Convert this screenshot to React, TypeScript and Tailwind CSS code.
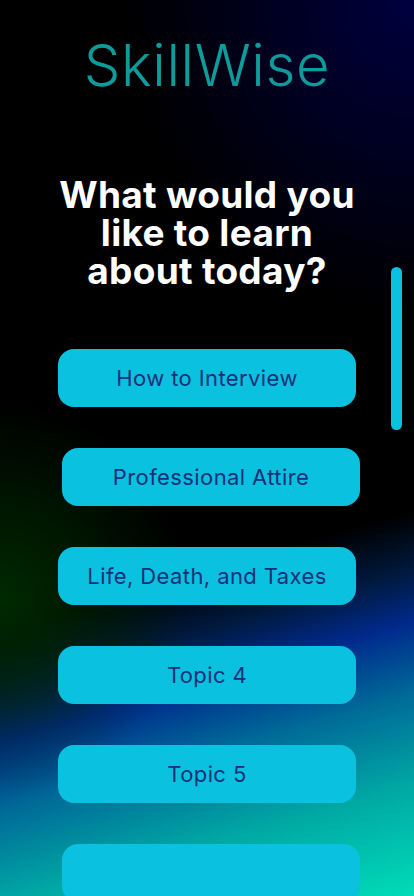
import React from "react";

const topics = [
  { label: "How to Interview", shift: false },
  { label: "Professional Attire", shift: true },
  { label: "Life, Death, and Taxes", shift: false },
  { label: "Topic 4", shift: false },
  { label: "Topic 5", shift: false },
  { label: "", shift: true },
];

export default function App() {
  return (
    <div className="relative h-screen w-full overflow-hidden bg-black bg-[radial-gradient(ellipse_70%_35%_at_100%_0%,#00003f_0%,transparent_100%),radial-gradient(ellipse_45%_22%_at_0%_67%,#002a00_0%,transparent_100%),linear-gradient(164deg,transparent_62%,#001a40_68%,#002a8c_73%,#006a98_80%,#00a8a4_89%,#00dcb8_100%)] font-['Inter','Liberation_Sans',sans-serif]">
      <div className="flex flex-col items-center">
        <h1 className="mt-[30px] text-[58px] font-light leading-[70px] tracking-[0.6px] text-[#0d9b9b]">
          SkillWise
        </h1>
        <h2 className="mt-[76px] w-[300px] text-center text-[37px] font-bold leading-[38px] tracking-[0.3px] text-white">
          What would you like to learn about today?
        </h2>
        <div className="mt-[59px] flex flex-col gap-[41px]">
          {topics.map((t) => (
            <button
              key={t.label + String(t.shift)}
              className={
                "flex h-[58px] w-[298px] items-center justify-center rounded-[16px] bg-[#0bc1e0] text-[22px] tracking-[0.4px] text-[#16307a] " +
                (t.shift ? "translate-x-[4px]" : "")
              }
            >
              {t.label}
            </button>
          ))}
        </div>
      </div>
      <div className="absolute left-[391px] top-[267px] h-[163px] w-[11px] rounded-full bg-[#0bc1e0]" />
    </div>
  );
}
